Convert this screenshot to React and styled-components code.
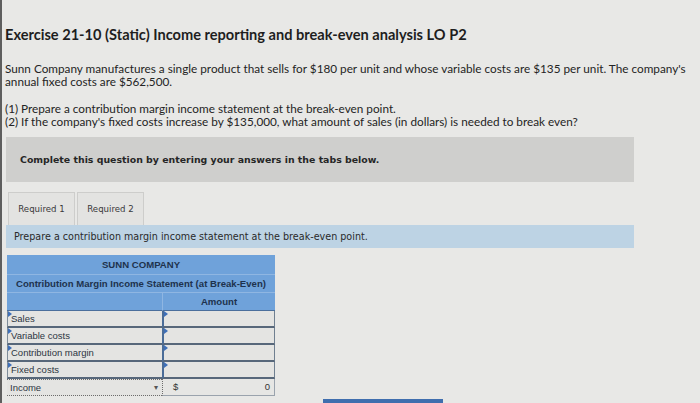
import React from 'react';
import styled, { createGlobalStyle } from 'styled-components';

const GlobalStyle = createGlobalStyle`
  body {
    margin: 0;
    background: #e8e8e6;
  }
`;

const rows = [
  { label: 'Sales' },
  { label: 'Variable costs' },
  { label: 'Contribution margin' },
  { label: 'Fixed costs' },
];

const App = () => {
  return (
    <Page>
      <GlobalStyle />
      <Title>Exercise 21-10 (Static) Income reporting and break-even analysis LO P2</Title>
      <Intro>
        <Line>Sunn Company manufactures a single product that sells for $180 per unit and whose variable costs are $135 per unit. The company's</Line>
        <Line>annual fixed costs are $562,500.</Line>
      </Intro>
      <Questions>
        <Line>(1) Prepare a contribution margin income statement at the break-even point.</Line>
        <Line>(2) If the company's fixed costs increase by $135,000, what amount of sales (in dollars) is needed to break even?</Line>
      </Questions>
      <Notice>Complete this question by entering your answers in the tabs below.</Notice>
      <Tabs>
        <Tab>Required 1</Tab>
        <Tab>Required 2</Tab>
      </Tabs>
      <Instruction>Prepare a contribution margin income statement at the break-even point.</Instruction>
      <Sheet>
        <HeadCell span={2} h={19}>SUNN COMPANY</HeadCell>
        <HeadCell span={2} h={17.5} ruled>Contribution Margin Income Statement (at Break-Even)</HeadCell>
        <HeadCell h={19} ruled closed />
        <HeadCell h={19} ruled closed divider>Amount</HeadCell>
        {rows.map((r) => (
          <React.Fragment key={r.label}>
            <LabelCell>{r.label}</LabelCell>
            <InputCell />
          </React.Fragment>
        ))}
        <TotalLabel>
          Income
          <Caret>▾</Caret>
        </TotalLabel>
        <TotalValue>
          <span>$</span>
          <span>0</span>
        </TotalValue>
      </Sheet>
      <Footer>
        <FooterBar />
      </Footer>
    </Page>
  );
};

const Page = styled.div`
  box-sizing: border-box;
  height: 403px;
  overflow: hidden;
  border-left: 2px solid #5e5e5e;
  padding: 27px 0 0 2px;
  color: #242424;
`;

const Title = styled.h1`
  margin: 0 0 0 1px;
  font: 700 14.6px/16px Lato, 'Liberation Sans', sans-serif;
  color: #1e1e1e;
`;

const Intro = styled.div`
  margin: 19px 0 0 1px;
  font: 400 11.75px Lato, 'Liberation Sans', sans-serif;
`;

const Questions = styled(Intro)`
  margin-top: 14px;
`;

const Line = styled.div`
  height: 13px;
  line-height: 13px;
  white-space: nowrap;
`;

const Notice = styled.div`
  box-sizing: border-box;
  display: flex;
  align-items: center;
  width: 628px;
  height: 45px;
  margin: 9px 0 0 2px;
  padding-left: 14px;
  background: #cfcfcd;
  font: 700 9.4px 'DejaVu Sans', Verdana, sans-serif;
  color: #262626;
`;

const Tabs = styled.div`
  display: flex;
  gap: 2px;
  margin: 10px 0 0 4px;
`;

const Tab = styled.div`
  box-sizing: border-box;
  display: flex;
  align-items: center;
  justify-content: center;
  width: 67px;
  height: 33px;
  border: 1px solid #cdcdcb;
  border-bottom: none;
  background: #e3e3e1;
  font: 400 8.6px 'DejaVu Sans', Verdana, sans-serif;
  color: #3a3a3a;
`;

const Instruction = styled.div`
  box-sizing: border-box;
  display: flex;
  align-items: center;
  width: 628px;
  height: 23px;
  margin-left: 2px;
  padding-left: 8px;
  background: #bdd3e4;
  font: 400 9.6px 'DejaVu Sans', Verdana, sans-serif;
  color: #2a2a2a;
`;

const Sheet = styled.div`
  display: grid;
  grid-template-columns: 155px 113px;
  width: 268px;
  margin: 7px 0 0 3px;
  font-family: 'Liberation Sans', Arial, sans-serif;
`;

const HeadCell = styled.div`
  grid-column: span ${(p) => p.span || 1};
  box-sizing: border-box;
  height: ${(p) => p.h}px;
  display: flex;
  align-items: center;
  justify-content: center;
  background: #6fa2da;
  border-top: ${(p) => (p.ruled ? '1px solid #8fb6e2' : 'none')};
  border-left: ${(p) => (p.divider ? '1px solid #8fb6e2' : 'none')};
  border-bottom: ${(p) => (p.closed ? '1px solid #4b6f9c' : 'none')};
  font-size: 9.6px;
  font-weight: 700;
  color: #1e324d;
`;

const Marked = styled.div`
  position: relative;
  box-sizing: border-box;
  height: 17px;
  background: #e4e4e2;
  &::before {
    content: '';
    position: absolute;
    top: 0;
    left: 0;
    border-top: 3px solid transparent;
    border-bottom: 3px solid transparent;
    border-left: 4px solid #3e6fb8;
  }
`;

const LabelCell = styled(Marked)`
  display: flex;
  align-items: center;
  padding-left: 3px;
  border-bottom: 2px solid #57677a;
  border-left: 1px solid #7f8c99;
  font-size: 9.5px;
  color: #2c3541;
`;

const InputCell = styled(Marked)`
  border-left: 2px solid #4a6c98;
  border-right: 1px solid #6f7f90;
  border-bottom: 2px solid #57677a;
`;

const TotalLabel = styled.div`
  box-sizing: border-box;
  height: 17px;
  display: flex;
  align-items: center;
  justify-content: space-between;
  padding: 0 4px 0 3px;
  border-top: 1px dotted #6c6c6c;
  border-bottom: 1px dotted #6c6c6c;
  background: #e4e4e2;
  font-size: 9.5px;
  color: #2c3541;
`;

const Caret = styled.span`
  font-size: 8px;
  color: #555;
`;

const TotalValue = styled.div`
  box-sizing: border-box;
  height: 17px;
  display: flex;
  align-items: center;
  justify-content: space-between;
  padding: 0 4px 0 10px;
  border-left: 1px dotted #6c6c6c;
  border-right: 1px solid #9aa3ad;
  border-bottom: 1px solid #9aa3ad;
  background: #e6e6e4;
  font-size: 9.5px;
  color: #333;
`;

const Footer = styled.div`
  display: flex;
  margin-top: 3px;
  padding-left: 319px;
`;

const FooterBar = styled.div`
  width: 120px;
  height: 4px;
  background: #3f6eae;
`;

export default App;
